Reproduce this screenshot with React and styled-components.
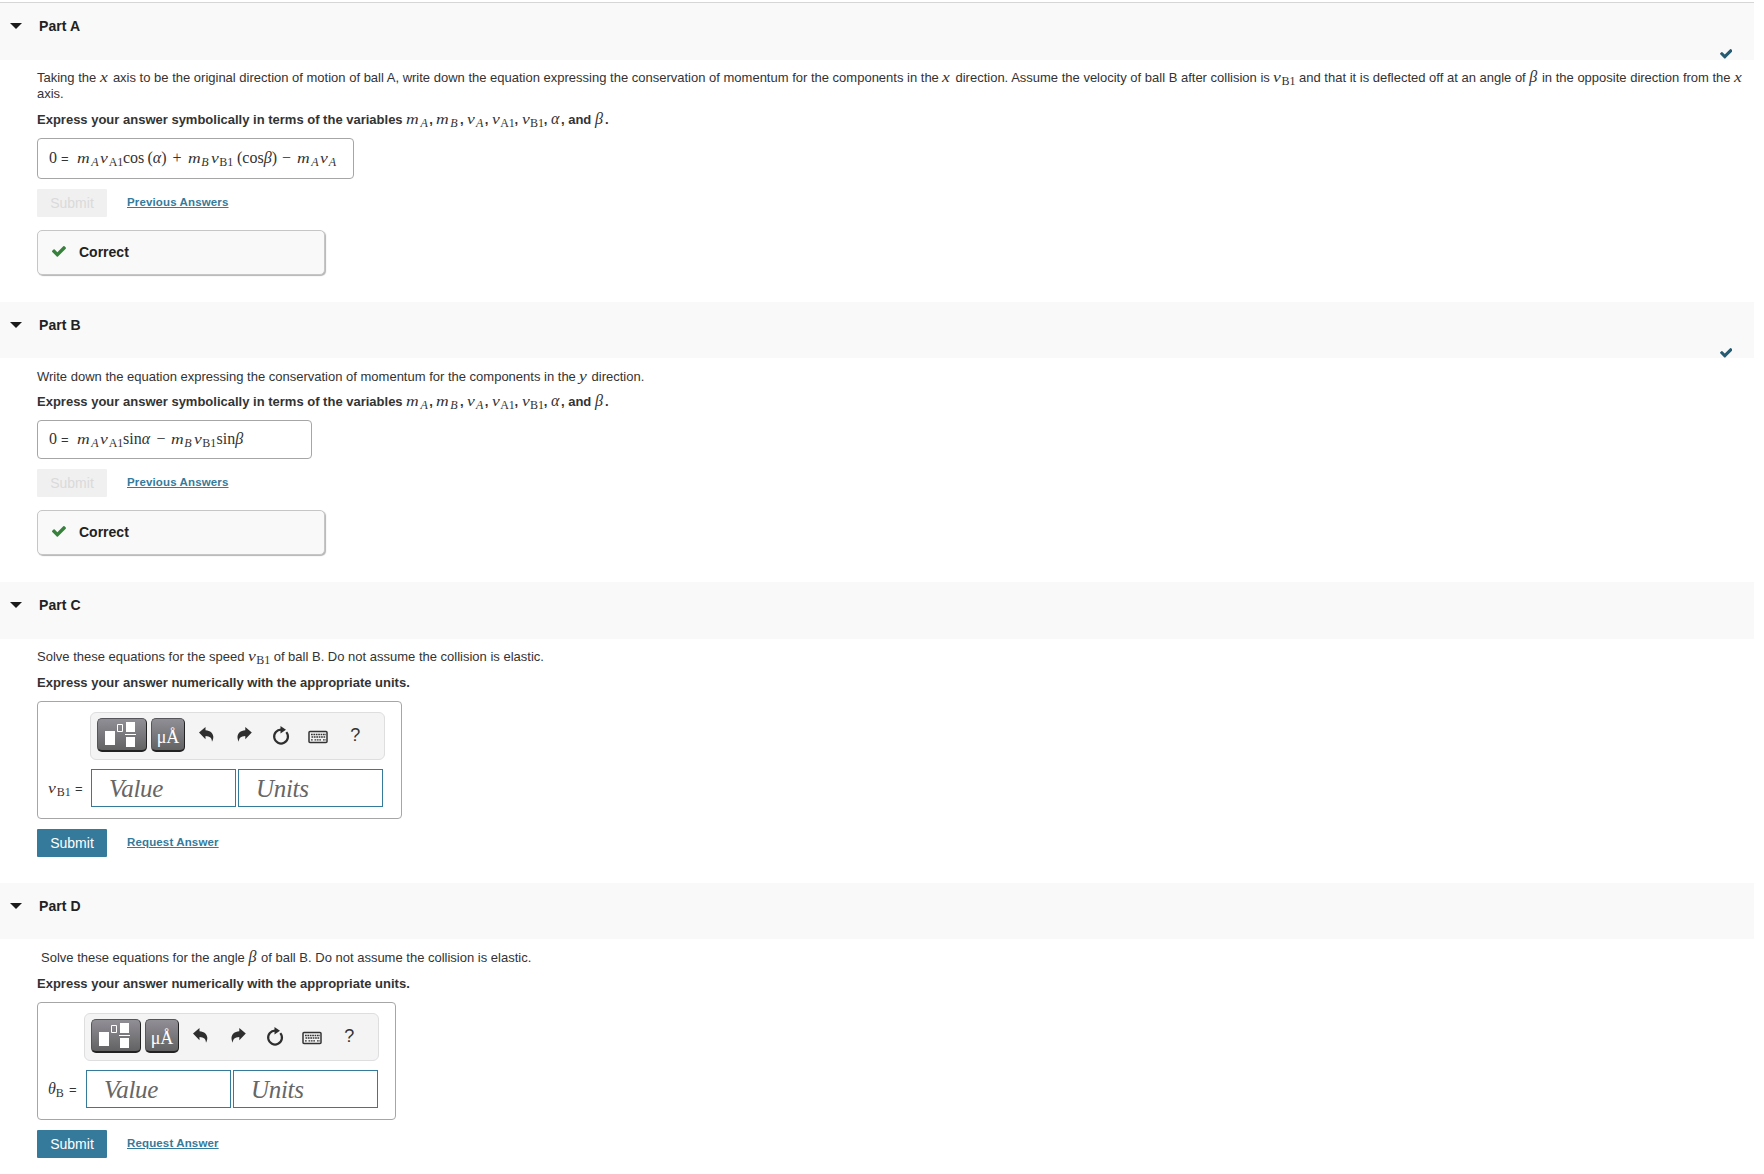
import React from "react";
import styled, { createGlobalStyle } from "styled-components";

const GlobalStyle = createGlobalStyle`
  body {
    margin: 0;
    background: #fff;
    overflow: hidden;
  }
`;

const Page = styled.main`
  width: 1754px;
  padding-top: 2px;
  font-family: "Liberation Sans", Arial, sans-serif;
  font-size: 13px;
  color: #333;
`;

const Part = styled.section`
  height: ${(p) => p.$height}px;
  display: flex;
  flex-direction: column;
`;

const PartHeader = styled.header`
  flex: none;
  box-sizing: border-box;
  height: ${(p) => p.$height}px;
  padding: 13px 22px 0 10px;
  border-top: ${(p) => (p.$rule ? "1px solid #d6d6d6" : "none")};
  background: #f9f9f9;
  display: flex;
  align-items: flex-start;
`;

const Caret = styled.span`
  margin: 7px 17px 0 0;
  border: solid transparent;
  border-width: 6px 6px 0;
  border-top-color: #1a1a1a;
`;

const Title = styled.h2`
  flex: 1;
  margin: 0;
  font-size: 14px;
  line-height: 20px;
  font-weight: 700;
  letter-spacing: 0.1px;
  color: #222;
`;

const CheckSvg = styled.svg`
  flex: none;
  width: ${(p) => p.$size}px;
  height: ${(p) => p.$size * 0.77}px;
  margin-top: ${(p) => p.$top || 0}px;
  fill: ${(p) => p.$color};
`;

const Body = styled.div`
  padding: ${(p) => p.$top || 10}px 0 0 37px;
  display: flex;
  flex-direction: column;
  align-items: flex-start;
`;

const Prompt = styled.p`
  margin: 0 0 ${(p) => p.$gap || 10}px;
  line-height: 16px;
  white-space: nowrap;
  padding-left: ${(p) => p.$indent || 0}px;
`;

const Instruction = styled(Prompt)`
  font-weight: 700;
`;

const Term = styled.span`
  display: inline-block;
  width: ${(p) => p.$w}px;
  line-height: 0;
  font-family: "Liberation Serif", serif;
  font-size: 16px;
  font-weight: 400;
  font-style: ${(p) => (p.$upright ? "normal" : "italic")};
  white-space: nowrap;
`;

// Latin variables are set a little wider than the serif italic draws them.
const Glyph = styled.span`
  display: inline-block;
  font-size: 15px;
  transform: scaleX(1.17);
  transform-origin: left;
`;

const Sub = styled.sub`
  font-size: 12px;
  line-height: 0;
  vertical-align: -3px;
  font-style: ${(p) => (p.$italic ? "italic" : "normal")};
  margin-left: ${(p) => p.$shift || 0}px;
`;

const Equals = styled.span`
  display: inline-block;
  width: 16px;
`;

const Equation = styled.div`
  box-sizing: border-box;
  width: ${(p) => p.$width}px;
  height: ${(p) => p.$height}px;
  padding: 1px 0 0 11px;
  border: 1px solid #a6a6a6;
  border-radius: 4px;
  line-height: ${(p) => p.$height - 3}px;
  white-space: nowrap;
`;

const Actions = styled.div`
  display: flex;
  align-items: flex-start;
  gap: 20px;
  margin-top: 10px;
`;

const Submit = styled.button`
  width: 70px;
  height: 28px;
  padding: 0;
  border: none;
  border-radius: 1px;
  font: 14px "Liberation Sans", Arial, sans-serif;
  color: ${(p) => (p.disabled ? "#dadada" : "#fff")};
  background: ${(p) => (p.disabled ? "#f0f0f0" : "#367a9b")};
`;

const AnswerLink = styled.a`
  margin-top: 5px;
  font-size: 11.5px;
  line-height: 16px;
  font-weight: 700;
  letter-spacing: 0.14px;
  color: #367a9b;
  text-decoration: underline;
`;

const Feedback = styled.div`
  box-sizing: border-box;
  width: 288px;
  height: 45px;
  margin-top: 13px;
  padding: 0 0 2px 14px;
  display: flex;
  align-items: center;
  gap: 13px;
  border: 1px solid #c6c6c6;
  border-radius: 5px;
  background: #f9f9f9;
  box-shadow: 1px 1px 1px #b4b4b4;
  font-size: 14px;
  font-weight: 700;
  color: #222;
`;

const AnswerBox = styled.div`
  box-sizing: border-box;
  width: ${(p) => p.$width}px;
  height: 118px;
  padding: 10px 0 0 10px;
  border: 1px solid #a6a6a6;
  border-radius: 4px;
  display: grid;
  grid-template-columns: ${(p) => p.$label}px 295px;
  grid-template-rows: 48px 38px;
  row-gap: 9px;
`;

const Toolbar = styled.div`
  grid-column: 2;
  box-sizing: border-box;
  border: 1px solid #dedede;
  border-radius: 6px;
  background: #f4f4f4;
  padding: 5px 0 0 6px;
  display: flex;
  align-items: flex-start;
`;

const DarkButton = styled.button`
  box-sizing: border-box;
  width: ${(p) => p.$width}px;
  height: 34px;
  margin-right: 4px;
  padding: ${(p) => p.$drop || 0}px 0 0;
  border: 1px solid #56565a;
  border-right-color: #222;
  border-bottom: 2px solid #222;
  border-radius: 5px;
  background: linear-gradient(#918f96, #626263);
  display: flex;
  align-items: center;
  justify-content: center;
  font: 18px "Liberation Serif", serif;
  color: #fff;
`;

const Tools = styled.svg`
  margin-top: 4px;
  flex: none;
`;

const Label = styled.span`
  padding-top: 1px;
  line-height: 38px;
  white-space: nowrap;
`;

const Fields = styled.div`
  display: flex;
  gap: 2px;
  padding-left: ${(p) => p.$inset}px;
`;

const Field = styled.input`
  box-sizing: border-box;
  width: 145px;
  height: 38px;
  padding: 1px 0 0 17px;
  border: 1px solid #367a9b;
  border-radius: 0;
  background: #fff;
  font: italic 25px "Liberation Serif", serif;
  letter-spacing: -0.3px;
  outline: none;
  &::placeholder {
    color: #666;
    opacity: 1;
  }
`;

const Check = ({ size, color, top }) => (
  <CheckSvg $size={size} $color={color} $top={top} viewBox="121 334 1550 1188">
    <path d="M1671 566q0 40-28 68l-724 724-136 136q-28 28-68 28t-68-28l-136-136-362-362q-28-28-28-68t28-68l136-136q28-28 68-28t68 28l294 295 656-657q28-28 68-28t68 28l136 136q28 28 28 68z" />
  </CheckSvg>
);

const DoneMark = () => <Check size={12.5} color="#255c73" top={33} />;

const Var = ({ name, sub, italic, w, shift }) => (
  <Term $w={w}>
    {/[a-z]/.test(name) ? <Glyph>{name}</Glyph> : name}
    {sub && (
      <Sub $italic={italic} $shift={shift}>
        {sub}
      </Sub>
    )}
  </Term>
);

const Variables = () => (
  <Instruction>
    Express your answer symbolically in terms of the variables{" "}
    <Var name="m" sub="A" italic w={23} shift={3.5} />, <Var name="m" sub="B" italic w={23.5} shift={3} />,{" "}
    <Var name="v" sub="A" italic w={17.5} shift={2} />, <Var name="v" sub="A1" w={22.5} shift={1.5} />,{" "}
    <Var name="v" sub="B1" w={22} shift={1.5} />, <Var name="α" w={10} />, and <Var name="β" w={10} />.
  </Instruction>
);

const TemplateIcon = () => (
  <svg width="34" height="27" viewBox="105 721 34 27">
    <path fill="#fff" d="M105 731h10v14h-10zM126 722h9v10h-9zM126 737h9v10h-9zM125 734h11v1h-11z" />
    <path fill="none" stroke="#fff" d="M117.500 724.500h5v7h-5z" />
  </svg>
);

// undo, redo, reset, keyboard and help
const ToolIcons = () => (
  <Tools width="176" height="26" viewBox="189 722 176 26">
    <g fill="#2e2e2e">
      <path d="M199 732.500l6.500-5.500v3.200c5 .3 7.500 3.200 7.800 6.300.1 2-.4 3.500-1.300 5.300-.2-3.800-2-5.600-6.500-5.800v3.300z" />
      <path d="M251.800 732.500l-6.500-5.500v3.200c-5 .3-7.500 3.200-7.800 6.300-.1 2 .4 3.500 1.300 5.300.2-3.800 2-5.600 6.500-5.800v3.300z" />
      <path d="M280.500 726l5.500 3.700-5.500 3.700z" />
    </g>
    <path d="M281.500 729.700a6.900 6.900 0 1 0 4.800 2.400" fill="none" stroke="#2e2e2e" strokeWidth="2.200" />
    <rect x="309" y="731.500" width="18" height="11" rx="1" fill="none" stroke="#333" strokeWidth="1.500" />
    <path
      d="M311 734.500h15M311.500 737h14M311 739.800h2M314.500 739.800h7M323 739.800h3"
      stroke="#333"
      strokeWidth="1.300"
      strokeDasharray="1.700 .7"
    />
    <text x="350.300" y="741" fontSize="18" fontFamily="Liberation Sans, sans-serif" fill="#333">
      ?
    </text>
  </Tools>
);

const AnswerEntry = ({ width, label, inset = 1, children }) => (
  <AnswerBox $width={width} $label={label}>
    <Toolbar>
      <DarkButton $width={50} aria-label="Templates">
        <TemplateIcon />
      </DarkButton>
      <DarkButton $width={34} $drop={6} aria-label="Symbols">
        μÅ
      </DarkButton>
      <ToolIcons />
    </Toolbar>
    <Label>{children}</Label>
    <Fields $inset={inset}>
      <Field placeholder="Value" />
      <Field placeholder="Units" />
    </Fields>
  </AnswerBox>
);

const Solved = () => (
  <>
    <Actions>
      <Submit disabled>Submit</Submit>
      <AnswerLink>Previous Answers</AnswerLink>
    </Actions>
    <Feedback>
      <Check size={14} color="#37813d" />
      Correct
    </Feedback>
  </>
);

const Open = () => (
  <Actions>
    <Submit>Submit</Submit>
    <AnswerLink>Request Answer</AnswerLink>
  </Actions>
);

function App() {
  return (
    <Page>
      <GlobalStyle />
      <Part $height={300}>
        <PartHeader $height={58} $rule>
          <Caret />
          <Title>Part A</Title>
          <DoneMark />
        </PartHeader>
        <Body>
          <Prompt>
            Taking the <Var name="x" w={9.4} /> axis to be the original direction of motion of ball A, write down the
            equation expressing the conservation of momentum for the components in the <Var name="x" w={9.4} />{" "}
            direction. Assume the velocity of ball B after collision is <Var name="v" sub="B1" w={22} shift={1.5} /> and
            that it is deflected off at an angle of <Var name="β" w={9} /> in the opposite direction from the{" "}
            <Var name="x" w={9.4} />
            <br />
            axis.
          </Prompt>
          <Variables />
          <Equation $width={317} $height={41}>
            <Term $upright $w={12}>0</Term>
            <Equals>=</Equals>
            <Var name="m" sub="A" italic w={23} shift={3.5} />
            <Var name="v" sub="A1" w={23} shift={2} />
            <Term $upright $w={24.5}>cos</Term>
            <Term $upright $w={25}>(<i>α</i>)</Term>
            <Term $upright $w={15}>+</Term>
            <Var name="m" sub="B" italic w={23.5} shift={3} />
            <Var name="v" sub="B1" w={26} shift={1.5} />
            <Term $upright $w={45}>(cos<i>β</i>)</Term>
            <Term $upright $w={15}>−</Term>
            <Var name="m" sub="A" italic w={23} shift={3.5} />
            <Var name="v" sub="A" italic w={18} shift={2} />
          </Equation>
          <Solved />
        </Body>
      </Part>
      <Part $height={280}>
        <PartHeader $height={56}>
          <Caret />
          <Title>Part B</Title>
          <DoneMark />
        </PartHeader>
        <Body $top={11}>
          <Prompt $gap={9}>
            Write down the equation expressing the conservation of momentum for the components in the{" "}
            <Var name="y" w={8.5} /> direction.
          </Prompt>
          <Variables />
          <Equation $width={275} $height={39}>
            <Term $upright $w={12}>0</Term>
            <Equals>=</Equals>
            <Var name="m" sub="A" italic w={23} shift={3.5} />
            <Var name="v" sub="A1" w={23} shift={2} />
            <Term $upright $w={33.5}>sin<i>α</i></Term>
            <Term $upright $w={14}>−</Term>
            <Var name="m" sub="B" italic w={23.5} shift={3} />
            <Var name="v" sub="B1" w={22.5} shift={1.5} />
            <Term $upright $w={30}>sin<i>β</i></Term>
          </Equation>
          <Solved />
        </Body>
      </Part>
      <Part $height={301}>
        <PartHeader $height={57}>
          <Caret />
          <Title>Part C</Title>
        </PartHeader>
        <Body>
          <Prompt>
            Solve these equations for the speed <Var name="v" sub="B1" w={22} shift={1.5} /> of ball B. Do not assume the
            collision is elastic.
          </Prompt>
          <Instruction>Express your answer numerically with the appropriate units.</Instruction>
          <AnswerEntry width={365} label={42}>
            <Var name="v" sub="B1" w={23.5} shift={2} /> =
          </AnswerEntry>
          <Open />
        </Body>
      </Part>
      <Part $height={290}>
        <PartHeader $height={56}>
          <Caret />
          <Title>Part D</Title>
        </PartHeader>
        <Body $top={11}>
          <Prompt $indent={4}>
            Solve these equations for the angle <Var name="β" w={9} /> of ball B. Do not assume the collision is
            elastic.
          </Prompt>
          <Instruction>Express your answer numerically with the appropriate units.</Instruction>
          <AnswerEntry width={359} label={36} inset={2}>
            <Var name="θ" sub="B" w={17.5} /> =
          </AnswerEntry>
          <Open />
        </Body>
      </Part>
    </Page>
  );
}

export default App;
